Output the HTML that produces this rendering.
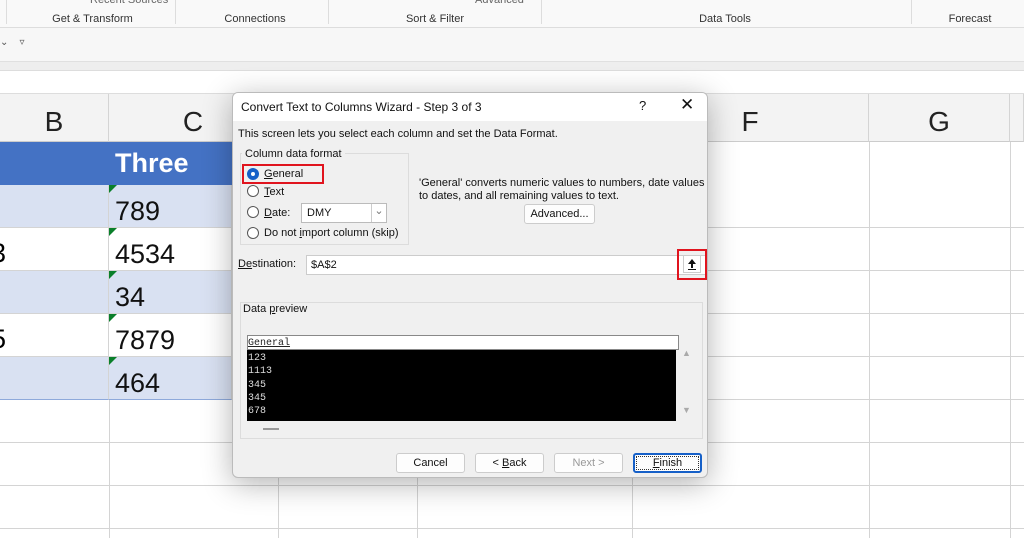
<!DOCTYPE html>
<html><head><style>
*{margin:0;padding:0;box-sizing:border-box}
body{width:1024px;height:538px;overflow:hidden;background:#fff;font-family:"Liberation Sans",sans-serif;position:relative}
.abs{position:absolute}
.rib{left:0;top:0;width:1024px;height:28px;background:#f9f9f9;border-bottom:1px solid #ddd}
.gl{top:13px;font-size:11px;color:#333;text-align:center}
.vs{top:0;width:1px;height:24px;background:#ddd}
.tb{left:0;top:28px;width:1024px;height:34px;background:#f7f7f7;border-bottom:1px solid #e0e0e0}
.fb{left:0;top:70px;width:1024px;height:24px;background:#fff;border-top:1px solid #ddd;border-bottom:1px solid #ddd}
.ch{top:94px;height:48px;background:#f3f3f3;border-bottom:1px solid #ccc;border-right:1px solid #d4d4d4;font-size:28px;color:#222;text-align:center;line-height:56px}
.cell{height:43px;border-bottom:1px solid #d4d4d4;border-right:1px solid #d4d4d4}
.num{font-size:27px;color:#111;padding-left:6px;line-height:52px}
.num:before{content:"";position:absolute;left:0;top:0;border-top:8px solid #0a7f2a;border-right:8px solid transparent}
.dlg{left:232px;top:92px;width:476px;height:386px;background:#f0f0f0;border:1px solid #bbb;border-radius:6px;box-shadow:0 6px 30px rgba(0,0,0,.3);font-size:11px;color:#111;overflow:hidden}
.btn{position:absolute;height:20px;background:#fdfdfd;border:1px solid #ccc;border-radius:3px;text-align:center;line-height:18px;font-size:11px}
.rad{position:absolute;width:12px;height:12px;border:1px solid #555;border-radius:50%;background:#fff}
.mono{font-family:"Liberation Mono",monospace;font-size:10px;color:#ddd;line-height:13.3px}
</style></head><body>
<div class="abs rib"></div>
<div class="abs gl" style="left:40px;width:105px">Get &amp; Transform</div>
<div class="abs gl" style="left:195px;width:120px">Connections</div>
<div class="abs gl" style="left:375px;width:120px">Sort &amp; Filter</div>
<div class="abs gl" style="left:665px;width:120px">Data Tools</div>
<div class="abs gl" style="left:930px;width:80px">Forecast</div>
<div class="abs vs" style="left:6px"></div><div class="abs vs" style="left:175px"></div><div class="abs vs" style="left:328px"></div><div class="abs vs" style="left:541px"></div><div class="abs vs" style="left:911px"></div>
<div class="abs" style="left:90px;top:-6px;font-size:11px;color:#666">Recent Sources</div>
<div class="abs" style="left:475px;top:-6px;font-size:11px;color:#666">Advanced</div>
<div class="abs tb"></div>
<div class="abs" style="left:0;top:37px;font-size:10px;color:#555">⌄ &nbsp;&nbsp; ▿</div>
<div class="abs" style="left:0;top:62px;width:1024px;height:8px;background:#eee"></div>
<div class="abs fb"></div>
<div class="abs ch" style="left:0;width:109px">B</div>
<div class="abs ch" style="left:109px;width:169px">C</div>
<div class="abs ch" style="left:278px;width:354px"></div>
<div class="abs ch" style="left:632px;width:237px">F</div>
<div class="abs ch" style="left:869px;width:141px">G</div>
<div class="abs ch" style="left:1010px;width:14px"></div>
<!-- grid -->
<div class="abs" style="left:0;top:185px;width:1024px;height:355px;background:repeating-linear-gradient(to bottom,transparent 0,transparent 42px,#d4d4d4 42px,#d4d4d4 43px)"></div>
<div class="abs" style="left:109px;top:142px;width:1px;height:396px;background:#d4d4d4"></div>
<div class="abs" style="left:278px;top:142px;width:1px;height:396px;background:#d4d4d4"></div>
<div class="abs" style="left:417px;top:142px;width:1px;height:396px;background:#d4d4d4"></div>
<div class="abs" style="left:632px;top:142px;width:1px;height:396px;background:#d4d4d4"></div>
<div class="abs" style="left:869px;top:142px;width:1px;height:396px;background:#d4d4d4"></div>
<div class="abs" style="left:1010px;top:142px;width:1px;height:396px;background:#d4d4d4"></div>
<!-- table -->
<div class="abs" style="left:0;top:142px;width:232px;height:43px;background:#4472c4"></div>
<div class="abs" style="left:115px;top:148px;font-size:27px;font-weight:bold;color:#fff">Three</div>
<div class="abs cell" style="left:0;top:185px;width:109px;background:#d9e1f2"></div>
<div class="abs cell num" style="left:109px;top:185px;width:123px;background:#d9e1f2">789</div>
<div class="abs cell" style="left:0;top:228px;width:109px;background:#fff;overflow:hidden"><span style="font-size:27px;position:absolute;left:-9px;line-height:50px">3</span></div>
<div class="abs cell num" style="left:109px;top:228px;width:123px;background:#fff">4534</div>
<div class="abs cell" style="left:0;top:271px;width:109px;background:#d9e1f2"></div>
<div class="abs cell num" style="left:109px;top:271px;width:123px;background:#d9e1f2">34</div>
<div class="abs cell" style="left:0;top:314px;width:109px;background:#fff;overflow:hidden"><span style="font-size:27px;position:absolute;left:-9px;line-height:50px">5</span></div>
<div class="abs cell num" style="left:109px;top:314px;width:123px;background:#fff">7879</div>
<div class="abs cell" style="left:0;top:357px;width:109px;background:#d9e1f2;border-bottom-color:#8ea9db"></div>
<div class="abs cell num" style="left:109px;top:357px;width:123px;background:#d9e1f2;border-bottom-color:#8ea9db">464</div>
<!-- dialog -->
<div class="abs dlg">
 <div style="height:28px;background:#fff;font-size:12px;padding:7px 0 0 8px">Convert Text to Columns Wizard - Step 3 of 3</div>
 <div class="abs" style="left:406px;top:5px;font-size:13px">?</div>
 <div class="abs" style="left:447px;top:2px;font-size:17px">✕</div>
 <div class="abs" style="left:5px;top:35px">This screen lets you select each column and set the Data Format.</div>
 <div class="abs" style="left:7px;top:60px;width:169px;height:92px;border:1px solid #dcdcdc"></div>
 <div class="abs" style="left:9px;top:55px;background:#f0f0f0;padding:0 3px">Column data format</div>
 <div class="abs" style="left:9px;top:71px;width:82px;height:20px;border:2px solid #e0141e"></div>
 <div class="rad" style="left:14px;top:75px;border:4px solid #1660c8"></div><div class="abs" style="left:31px;top:75px"><u>G</u>eneral</div>
 <div class="rad" style="left:14px;top:92px"></div><div class="abs" style="left:31px;top:93px"><u>T</u>ext</div>
 <div class="rad" style="left:14px;top:113px"></div><div class="abs" style="left:31px;top:114px"><u>D</u>ate:</div>
 <div class="abs" style="left:68px;top:110px;width:86px;height:20px;background:#fff;border:1px solid #bbb;padding:3px 0 0 5px">DMY<span style="position:absolute;right:0;top:0;width:15px;height:18px;border-left:1px solid #ccc;text-align:center;color:#777">⌄</span></div>
 <div class="rad" style="left:14px;top:134px"></div><div class="abs" style="left:31px;top:134px">Do not <u>i</u>mport column (skip)</div>
 <div class="abs" style="left:186px;top:84px;line-height:13px">'General' converts numeric values to numbers, date values<br>to dates, and all remaining values to text.</div>
 <div class="btn" style="left:291px;top:111px;width:71px">Advanced...</div>
 <div class="abs" style="left:5px;top:165px"><u>De</u>stination:</div>
 <div class="abs" style="left:73px;top:162px;width:440px;height:20px;background:#fff;border:1px solid #ccc;padding:3px 4px">$A$2</div>
 <div class="abs" style="left:444px;top:156px;width:30px;height:31px;border:2px solid #e0141e"></div>
 <div class="abs" style="left:450px;top:162px;width:18px;height:18px;background:#fff;border:1px solid #ccc"><svg width="16" height="16" viewBox="0 0 16 16"><path d="M8 3 L4 8 H7 V12 H9 V8 H12 Z M4 13 H12 V14 H4Z" fill="#111"/></svg></div>
 <div class="abs" style="left:7px;top:209px;width:463px;height:137px;border:1px solid #dcdcdc"></div>
 <div class="abs" style="left:10px;top:210px">Data <u>p</u>review</div>
 <div class="abs" style="left:14px;top:242px;width:432px;height:15px;background:#fff;border:1px solid #888"></div>
 <div class="abs mono" style="left:15px;top:244px;color:#222"><u>General</u></div>
 <div class="abs" style="left:14px;top:257px;width:429px;height:71px;background:#000;padding:2px 0 0 1px" ><div class="mono">123<br>1113<br>345<br>345<br>678</div></div>
 <div class="abs" style="left:449px;top:255px;font-size:9px;color:#aaa">▲</div>
 <div class="abs" style="left:449px;top:312px;font-size:9px;color:#aaa">▼</div>
 <div class="abs" style="left:30px;top:335px;width:16px;height:2px;background:#999"></div>
 <div class="btn" style="left:163px;top:360px;width:69px">Cancel</div>
 <div class="btn" style="left:242px;top:360px;width:69px">&lt; <u>B</u>ack</div>
 <div class="btn" style="left:321px;top:360px;width:69px;color:#999">Next &gt;</div>
 <div class="btn" style="left:400px;top:360px;width:69px;border:2px solid #1660c8;outline:1px dotted #333;outline-offset:-4px;line-height:16px"><u>F</u>inish</div>
</div>
</body></html>
